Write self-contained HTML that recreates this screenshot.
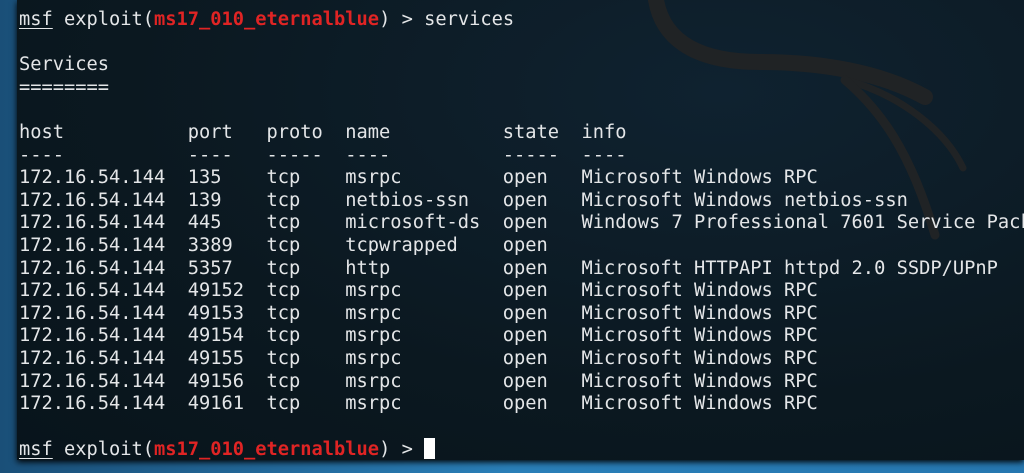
<!DOCTYPE html>
<html><head><meta charset="utf-8"><style>
html,body{margin:0;padding:0;width:1024px;height:473px;overflow:hidden;background:#1f5f8e;}
.desk{position:absolute;inset:0;background:linear-gradient(90deg,#1a4f78,#2a7fb8 50%,#2677b0);}
.term{position:absolute;left:17px;top:0;width:1007px;height:460px;background:radial-gradient(ellipse at 70% 20%,#0f2230,#0b1820 60%,#08141b);overflow:hidden;box-shadow:0 2px 6px #000;}
svg{position:absolute;left:0;top:0}
pre{position:absolute;left:2px;top:9px;margin:0;font-family:"DejaVu Sans Mono","Liberation Mono",monospace;font-size:18.7px;line-height:22.6px;color:#e4e6e8;white-space:pre;}
.r{color:#e02424;font-weight:bold}
u{text-decoration:underline;text-underline-offset:3px}
.cur{display:inline-block;width:11px;height:21px;background:#fff;vertical-align:-4px}
</style></head><body>
<div class="desk"></div>
<div class="term">
<svg width="1007" height="460" viewBox="17 0 1007 460">
<g fill="none" stroke="#202325" stroke-linecap="round">
<path d="M656 0 C662 35 690 62 760 62 C820 62 880 72 925 97" stroke-width="16"/>
<path d="M846 80 C900 95 945 130 963 168" stroke-width="7"/>
<path d="M845 80 C880 110 910 150 935 235" stroke-width="9"/>
</g>
</svg>
<pre><u>msf</u> exploit(<span class="r">ms17_010_eternalblue</span>) &gt; services

Services
========

host           port   proto  name          state  info
----           ----   -----  ----          -----  ----
172.16.54.144  135    tcp    msrpc         open   Microsoft Windows RPC
172.16.54.144  139    tcp    netbios-ssn   open   Microsoft Windows netbios-ssn
172.16.54.144  445    tcp    microsoft-ds  open   Windows 7 Professional 7601 Service Pack 1
172.16.54.144  3389   tcp    tcpwrapped    open   
172.16.54.144  5357   tcp    http          open   Microsoft HTTPAPI httpd 2.0 SSDP/UPnP
172.16.54.144  49152  tcp    msrpc         open   Microsoft Windows RPC
172.16.54.144  49153  tcp    msrpc         open   Microsoft Windows RPC
172.16.54.144  49154  tcp    msrpc         open   Microsoft Windows RPC
172.16.54.144  49155  tcp    msrpc         open   Microsoft Windows RPC
172.16.54.144  49156  tcp    msrpc         open   Microsoft Windows RPC
172.16.54.144  49161  tcp    msrpc         open   Microsoft Windows RPC

<u>msf</u> exploit(<span class="r">ms17_010_eternalblue</span>) &gt; <span class="cur"></span></pre>
</div>
</body></html>
